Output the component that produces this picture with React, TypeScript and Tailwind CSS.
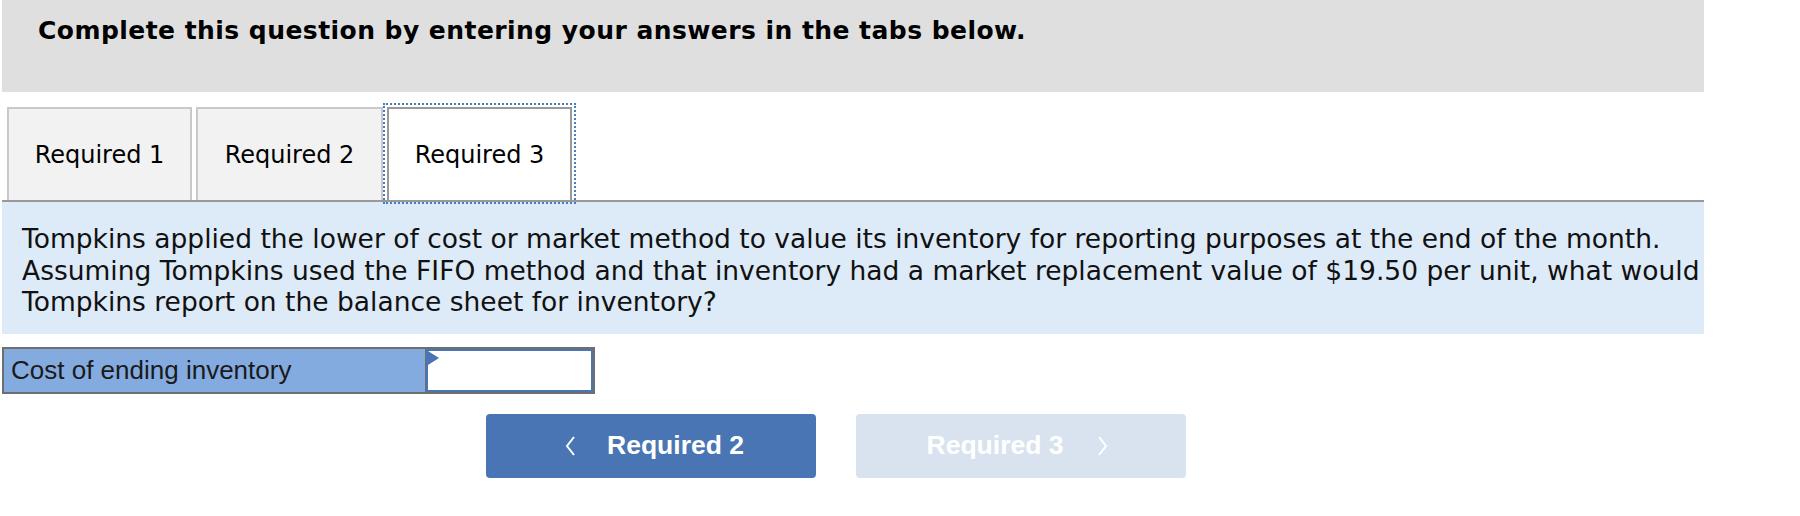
const verdana = "font-['Verdana','DejaVu_Sans',sans-serif]";
const arial = "font-['Arial','Liberation_Sans',sans-serif]";

const tabs = ['Required 1', 'Required 2', 'Required 3'];

const Chevron = ({ dir }: { dir: 'left' | 'right' }) => (
  <svg width="12" height="22" viewBox="0 0 12 22" fill="none" stroke="currentColor" strokeWidth="2">
    {dir === 'left' ? <polyline points="10,2 3,11 10,20" /> : <polyline points="2,2 9,11 2,20" />}
  </svg>
);

export default function App() {
  return (
    <div className="w-[1800px] h-[516px] bg-white overflow-hidden">
      <div className="ml-[2px] w-[1702px]">
        <div className={`h-[92px] bg-[#dfdfdf] pl-[36px] pt-[17px] ${verdana}`}>
          <h2 className="text-[25px] leading-[28px] font-bold tracking-[0.45px] text-black">
            Complete this question by entering your answers in the tabs below.
          </h2>
        </div>

        <div className="mt-[15px] flex gap-[4px] pl-[5px] border-b-2 border-[#999]">
          {tabs.map((t, i) =>
            i === 2 ? (
              <button
                key={t}
                type="button"
                className={`w-[185px] h-[93px] -mb-[2px] bg-white border-2 border-[#999] border-b-0 outline-2 outline-dotted outline-[#4a7cc0] outline-offset-2 text-[24px] text-black ${verdana}`}
              >
                {t}
              </button>
            ) : (
              <button
                key={t}
                type="button"
                className={`${i === 0 ? 'w-[185px]' : 'w-[187px]'} h-[93px] bg-[#f2f2f2] border-2 border-b-0 border-[#c9c9c9] text-[24px] text-black ${verdana}`}
              >
                {t}
              </button>
            ),
          )}
        </div>

        <div className={`bg-[#ddeaf7] pl-[20px] pt-[21px] pb-[16px] text-[26.5px] leading-[31.5px] text-[#111] ${verdana}`}>
          <p>Tompkins applied the lower of cost or market method to value its inventory for reporting purposes at the end of the month.</p>
          <p>Assuming Tompkins used the FIFO method and that inventory had a market replacement value of $19.50 per unit, what would</p>
          <p>Tompkins report on the balance sheet for inventory?</p>
        </div>

        <div className="mt-[13px] flex w-[593px] h-[47px] border-2 border-[#6e6e6e]">
          <div className={`w-[422px] bg-[#84abdf] border-r-[1px] border-[#6e6e6e] pl-[7px] flex items-center text-[26px] text-[#1a1a1a] ${arial}`}>
            Cost of ending inventory
          </div>
          <div className="flex-1 relative border-2 border-[#4a74b4] bg-white">
            <span className="absolute left-0 top-0 w-0 h-0 border-y-[7px] border-y-transparent border-l-[11px] border-l-[#4a74b4]" />
            <input className="w-full h-full outline-none bg-transparent" aria-label="Cost of ending inventory" />
          </div>
        </div>

        <div className={`mt-[20px] ml-[484px] flex gap-[40px] ${arial}`}>
          <button type="button" className="w-[330px] h-[64px] rounded-[4px] bg-[#4a75b5] text-white flex items-center justify-center gap-[31px] pl-[6px] text-[26.5px] font-bold">
            <Chevron dir="left" />
            <span>Required 2</span>
          </button>
          <button type="button" className="w-[330px] h-[64px] rounded-[4px] bg-[#d9e3ef] text-white flex items-center justify-center gap-[34px] pr-[6px] text-[26.5px] font-bold">
            <span>Required 3</span>
            <Chevron dir="right" />
          </button>
        </div>
      </div>
    </div>
  );
}
